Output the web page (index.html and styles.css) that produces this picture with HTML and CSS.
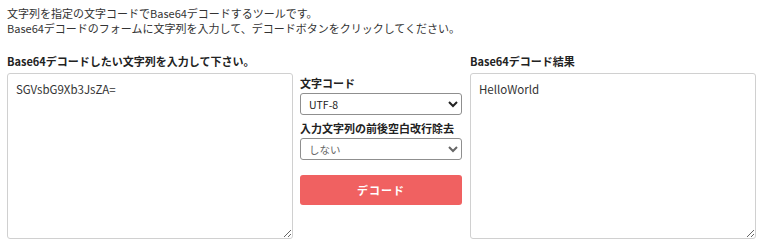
FILE: index.html
```html
<!DOCTYPE html>
<html lang="ja">
<head>
<meta charset="utf-8">
<link rel="stylesheet" href="styles.css">
</head>
<body>
<div class="intro">
  <p>文字列を指定の文字コードでBase64デコードするツールです。</p>
  <p>Base64デコードのフォームに文字列を入力して、デコードボタンをクリックしてください。</p>
</div>
<div class="tool">
  <div class="col col-in">
    <div class="label">Base64デコードしたい文字列を入力して下さい。</div>
    <textarea class="box">SGVsbG9Xb3JsZA=</textarea>
  </div>
  <div class="col col-mid">
    <div class="label mid-label">文字コード</div>
    <select class="sel"><option>UTF-8</option></select>
    <div class="label mid-label">入力文字列の前後空白改行除去</div>
    <select class="sel sel-light"><option>しない</option></select>
    <button class="btn">デコード</button>
  </div>
  <div class="col col-out">
    <div class="label">Base64デコード結果</div>
    <textarea class="box">HelloWorld</textarea>
  </div>
</div>
</body>
</html>
```
FILE: styles.css
```css
body {
  margin: 0;
  padding: 6px 7px 0 7px;
  font-family: "Noto Sans CJK JP", "Noto Sans", sans-serif;
  font-size: 11px;
  color: #333;
  background: #fff;
}
.intro p {
  margin: 0;
  line-height: 15px;
}
.tool {
  display: grid;
  grid-template-columns: 286px 162px 286px;
  column-gap: 7px;
  margin-top: 17px;
}
.col-out { margin-left: 1px; }
.label {
  font-weight: bold;
  color: #222;
  line-height: 16px;
  height: 16px;
  margin-bottom: 4px;
}
.box {
  display: block;
  box-sizing: border-box;
  width: 286px;
  height: 166px;
  border: 1px solid #d0d0d0;
  border-radius: 3px;
  padding: 7px 8px;
  font-family: "Noto Sans CJK JP", "Noto Sans", sans-serif;
  font-size: 11.5px;
  color: #333;
  resize: both;
  margin: 0;
}
.col-mid {
  display: flex;
  flex-direction: column;
  padding-top: 22px;
}
.mid-label {
  font-size: 11px;
  margin-top: 0;
  margin-bottom: 2px;
  height: 16px;
  line-height: 16px;
}
.sel {
  box-sizing: border-box;
  width: 162px;
  height: 22px;
  border: 1px solid #8f8f8f;
  border-radius: 3px;
  background: #fff;
  font-family: "Noto Sans CJK JP", "Noto Sans", sans-serif;
  font-size: 10.5px;
  color: #222;
  padding: 0 4px;
  margin: 0 0 5px 0;
}
.sel-light { color: #666; }
.btn {
  margin-top: 10px;
  box-sizing: border-box;
  width: 162px;
  height: 30px;
  border: none;
  border-radius: 3px;
  background: #f06161;
  color: #fff;
  font-family: "Noto Sans CJK JP", "Noto Sans", sans-serif;
  font-size: 11px;
  font-weight: bold;
  letter-spacing: 1px;
}
```
